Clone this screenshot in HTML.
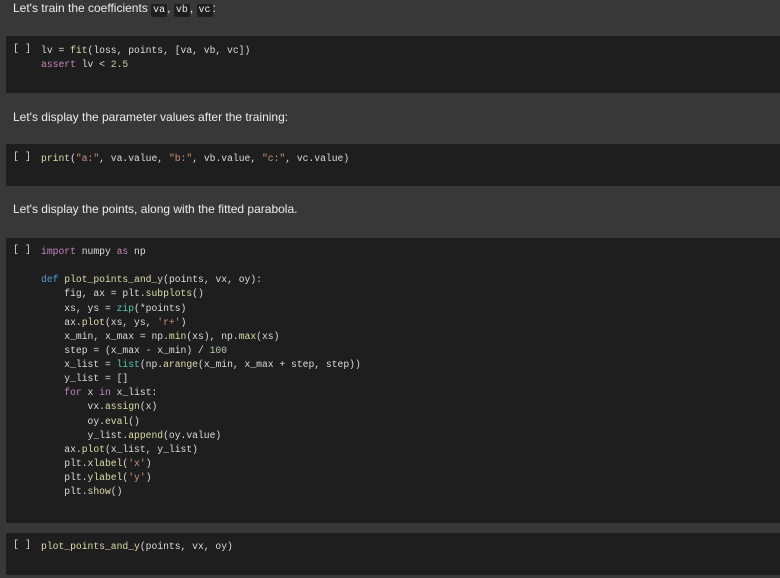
<!DOCTYPE html>
<html><head><style>
body{margin:0;width:780px;height:578px;background:#383838;position:relative;overflow:hidden;font-family:"Liberation Sans",sans-serif;}
.t{position:absolute;left:13px;color:#ececec;font-size:12px;line-height:16px;}
.ic{font-family:"Liberation Mono",monospace;font-size:10px;background:#1e1e1e;padding:1px 2px;border-radius:2px;}
.cell{position:absolute;left:6px;right:0;background:#1e1e1e;}
.code{position:absolute;left:41px;font-family:"Liberation Mono",monospace;font-size:9.7px;line-height:14.13px;color:#dcdcdc;white-space:pre;}
.br{position:absolute;left:13px;font-family:"Liberation Mono",monospace;font-size:10px;color:#d4d4d4;}
.k{color:#c586c0}.d{color:#569cd6}.f{color:#dcdcaa}.s{color:#ce9178}.n{color:#b5cea8}.b{color:#4ec9b0}
</style></head><body>
<div class="t" style="top:0px">Let's train the coefficients <span class="ic">va</span>, <span class="ic">vb</span>, <span class="ic">vc</span>:</div>
<div class="cell" style="top:36px;height:57px"></div>
<div class="br" style="top:44px">[ ]</div>
<div class="code" style="top:44px">lv = <span class="f">fit</span>(loss, points, [va, vb, vc])
<span class="k">assert</span> lv &lt; <span class="n">2.5</span></div>
<div class="t" style="top:109px">Let's display the parameter values after the training:</div>
<div class="cell" style="top:144px;height:42px"></div>
<div class="br" style="top:152px">[ ]</div>
<div class="code" style="top:152px"><span class="f">print</span>(<span class="s">"a:"</span>, va.value, <span class="s">"b:"</span>, vb.value, <span class="s">"c:"</span>, vc.value)</div>
<div class="t" style="top:201px">Let's display the points, along with the fitted parabola.</div>
<div class="cell" style="top:238px;height:285px"></div>
<div class="br" style="top:245px">[ ]</div>
<div class="code" style="top:245px"><span class="k">import</span> numpy <span class="k">as</span> np

<span class="d">def</span> <span class="f">plot_points_and_y</span>(points, vx, oy):
    fig, ax = plt.<span class="f">subplots</span>()
    xs, ys = <span class="b">zip</span>(*points)
    ax.<span class="f">plot</span>(xs, ys, <span class="s">'r+'</span>)
    x_min, x_max = np.<span class="f">min</span>(xs), np.<span class="f">max</span>(xs)
    step = (x_max - x_min) / <span class="n">100</span>
    x_list = <span class="b">list</span>(np.<span class="f">arange</span>(x_min, x_max + step, step))
    y_list = []
    <span class="k">for</span> x <span class="k">in</span> x_list:
        vx.<span class="f">assign</span>(x)
        oy.<span class="f">eval</span>()
        y_list.<span class="f">append</span>(oy.value)
    ax.<span class="f">plot</span>(x_list, y_list)
    plt.<span class="f">xlabel</span>(<span class="s">'x'</span>)
    plt.<span class="f">ylabel</span>(<span class="s">'y'</span>)
    plt.<span class="f">show</span>()</div>
<div class="cell" style="top:533px;height:42px"></div>
<div class="br" style="top:540px">[ ]</div>
<div class="code" style="top:540px"><span class="f">plot_points_and_y</span>(points, vx, oy)</div>
</body></html>
